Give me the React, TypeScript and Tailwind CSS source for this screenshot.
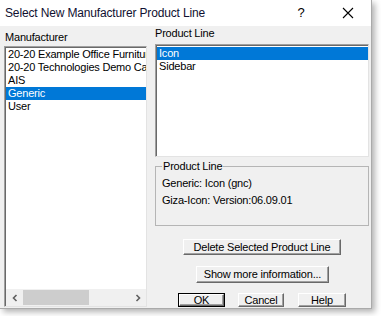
import React from "react"

const font = { fontFamily: '"Liberation Sans", Arial, sans-serif' }

function Btn({ label, className, isDefault }: { label: string; className: string; isDefault?: boolean }) {
  return (
    <div className={`${className} ${isDefault ? "border border-black" : ""}`}>
      <div className="h-full w-full border-t border-l border-white border-r border-b border-r-[#696969] border-b-[#696969] bg-[#f0f0f0] flex items-center justify-center text-[11px] tracking-[-0.2px] text-black leading-none shadow-[inset_-1px_-1px_0_#a0a0a0]">
        {label}
      </div>
    </div>
  )
}

export default function App() {
  const manufacturers = [
    "20-20 Example Office Furniture",
    "20-20 Technologies Demo Catalog",
    "AIS",
    "Generic",
    "User",
  ]
  const productLines = ["Icon", "Sidebar"]

  return (
    <div className="w-[381px] h-[316px] bg-white" style={font}>
      <div className="w-[372px] h-[309px] bg-[#f0f0f0] border-r border-b border-[#aaaaaa] shadow-[3px_3px_6px_rgba(0,0,0,0.3)] flex flex-col">
        <div className="h-[26px] bg-white flex items-center pl-[5px] shrink-0">
          <span className="text-[12px] tracking-[-0.15px] text-[#101030] flex-1 whitespace-nowrap">Select New Manufacturer Product Line</span>
          <span className="text-[13px] text-black w-[10px] mr-[36px] text-center">?</span>
          <svg width="12" height="12" viewBox="0 0 12 12" className="mr-[17px]">
            <path d="M1 1L11 11M11 1L1 11" stroke="#000" strokeWidth="1.1" />
          </svg>
        </div>

        <div className="flex flex-1 min-h-0 pl-[4px] pr-[2px] gap-[8px] tracking-[-0.2px]">
          <div className="w-[143px] flex flex-col">
            <div className="text-[11px] text-black mt-[5px] h-[15px] leading-[13px] pl-[1px]">Manufacturer</div>
            <div className="flex-1 mb-[1px] border-t border-l border-[#a0a0a0] border-r border-b border-r-[#e3e3e3] border-b-[#e3e3e3] flex flex-col">
              <div className="flex-1 border-t border-l border-[#696969] bg-white flex flex-col min-h-0">
                <div className="flex-1 overflow-hidden">
                  {manufacturers.map((m) => (
                    <div
                      key={m}
                      className={`h-[13px] leading-[13px] text-[11px] pl-[2px] whitespace-nowrap overflow-hidden ${
                        m === "Generic" ? "bg-[#0078d7] text-white" : "text-black"
                      }`}
                    >
                      {m}
                    </div>
                  ))}
                </div>
                <div className="h-[17px] bg-[#f0f0f0] flex items-center shrink-0">
                  <div className="w-[17px] flex items-center justify-center">
                    <svg width="6" height="8" viewBox="0 0 6 8">
                      <path d="M4.5 1L1.5 4L4.5 7" stroke="#606060" strokeWidth="1.6" fill="none" />
                    </svg>
                  </div>
                  <div className="w-[66px] h-[15px] bg-[#cdcdcd]" />
                  <div className="flex-1" />
                  <div className="w-[17px] flex items-center justify-center">
                    <svg width="6" height="8" viewBox="0 0 6 8">
                      <path d="M1.5 1L4.5 4L1.5 7" stroke="#606060" strokeWidth="1.6" fill="none" />
                    </svg>
                  </div>
                </div>
              </div>
            </div>
          </div>

          <div className="w-[214px] flex flex-col">
            <div className="text-[11px] text-black mt-[1px] h-[17px] leading-[13px]">Product Line</div>
            <div className="h-[113px] border-t border-l border-[#a0a0a0] border-r border-b border-r-[#e3e3e3] border-b-[#e3e3e3]">
              <div className="h-full border-t border-l border-[#696969] bg-white pt-[1px]">
                {productLines.map((p) => (
                  <div
                    key={p}
                    className={`h-[13px] leading-[13px] text-[11px] pl-[2px] ${
                      p === "Icon" ? "bg-[#0078d7] text-white" : "text-black"
                    }`}
                  >
                    {p}
                  </div>
                ))}
              </div>
            </div>

            <fieldset className="mt-[3px] h-[66px] border border-[#b5b5b5] px-[6px] pb-0">
              <legend className="text-[11px] text-black px-[1px] leading-[12px]">Product Line</legend>
              <div className="text-[11px] text-black leading-[17px] mt-[3px]">Generic: Icon (gnc)</div>
              <div className="text-[11px] text-black leading-[17px]">Giza-Icon: Version:06.09.01</div>
            </fieldset>

            <Btn label="Delete Selected Product Line" className="mt-[13px] ml-[28px] w-[158px] h-[16px]" />
            <Btn label="Show more information..." className="mt-[11px] ml-[41px] w-[133px] h-[17px]" />
            <div className="flex mt-[10px] ml-[23px]">
              <Btn label="OK" className="w-[47px] h-[14px]" isDefault />
              <Btn label="Cancel" className="ml-[13px] w-[46px] h-[14px]" />
              <Btn label="Help" className="ml-[14px] w-[48px] h-[14px]" />
            </div>
          </div>
        </div>
      </div>
    </div>
  )
}
